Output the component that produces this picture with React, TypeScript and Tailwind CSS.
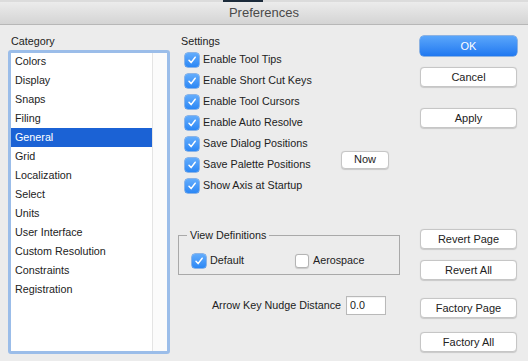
import React from "react";

const categories = [
  "Colors",
  "Display",
  "Snaps",
  "Filing",
  "General",
  "Grid",
  "Localization",
  "Select",
  "Units",
  "User Interface",
  "Custom Resolution",
  "Constraints",
  "Registration",
];

const settings = [
  "Enable Tool Tips",
  "Enable Short Cut Keys",
  "Enable Tool Cursors",
  "Enable Auto Resolve",
  "Save Dialog Positions",
  "Save Palette Positions",
  "Show Axis at Startup",
];

const CheckBox: React.FC<{ checked?: boolean }> = ({ checked }) =>
  checked ? (
    <span className="flex h-[14px] w-[14px] shrink-0 items-center justify-center rounded-[3px] bg-gradient-to-b from-[#62acfc] to-[#2a87f5] shadow-[0_0_0_0.5px_#2a7be0]">
      <svg width="10" height="10" viewBox="0 0 10 10">
        <path d="M2 5.2 L4.1 7.6 L8.2 2.2" fill="none" stroke="white" strokeWidth="1.5" strokeLinecap="round" strokeLinejoin="round" />
      </svg>
    </span>
  ) : (
    <span className="h-[14px] w-[14px] shrink-0 rounded-[3px] border border-[#b4b4b4] bg-white shadow-[0_0.5px_1px_rgba(0,0,0,0.15)]" />
  );

const Btn: React.FC<{ label: string; className?: string; primary?: boolean }> = ({ label, className = "", primary }) => (
  <div
    className={`flex h-[20px] w-[97px] items-center justify-center rounded-[4px] text-[11px] ${
      primary
        ? "bg-gradient-to-b from-[#5aa6fb] to-[#1f78f0] text-white shadow-[0_0_0_0.5px_#2c78d8]"
        : "border border-[#c6c6c6] bg-white text-[#222] shadow-[0_0.5px_1px_rgba(0,0,0,0.15)]"
    } ${className}`}
  >
    {label}
  </div>
);

export default function App() {
  return (
    <div className="h-[361px] w-[528px] overflow-hidden bg-[#ececec] text-[10.75px] text-[#222]" style={{ fontFamily: '"Liberation Sans", Arial, sans-serif' }}>
      {/* strip behind window */}
      <div className="flex h-[2px] bg-[#dcdcdc]">
        <div className="w-[223px]" />
        <div className="w-[40px] bg-[#1c2b3b]" />
      </div>
      {/* title bar */}
      <div className="flex h-[23px] items-center justify-center border-b border-[#b7b7b7] bg-gradient-to-b from-[#ececec] to-[#d4d4d4] text-[13px] text-[#4a4a4a]">
        Preferences
      </div>

      <div className="flex">
        {/* Category */}
        <div className="ml-[8px] w-[162px]">
          <div className="h-[25px] pl-[3px] pt-[9px] leading-[14px]">Category</div>
          <div className="flex h-[304px] rounded-[3px] border-[3px] border-[#9bbde9] bg-white">
            <div className="-mt-[1px] w-[141px]">
              {categories.map((c) => (
                <div
                  key={c}
                  className={`flex h-[19px] items-center pl-[4px] ${c === "General" ? "bg-[#1b62d5] text-white" : ""}`}
                >
                  {c}
                </div>
              ))}
            </div>
            <div className="flex-1 border-l border-[#e4e4e4] bg-[#fbfbfb]" />
          </div>
        </div>

        {/* Settings */}
        <div className="ml-[8px] w-[222px]">
          <div className="h-[24px] pl-[3px] pt-[9px] leading-[14px]">Settings</div>
          {settings.map((s, i) => (
            <div key={s} className="flex h-[21px] items-center gap-[4px] pl-[7px]">
              <CheckBox checked />
              <span className={i === 5 ? "w-[134px]" : ""}>{s}</span>
              {i === 5 && (
                <div className="-mt-[10px] flex h-[18px] w-[48px] items-center justify-center rounded-[4px] border border-[#c6c6c6] bg-white text-[11px] shadow-[0_0.5px_1px_rgba(0,0,0,0.15)]">
                  Now
                </div>
              )}
            </div>
          ))}

          <fieldset className="mt-[32px] h-[47px] w-[222px] border border-[#a9a9a9]">
            <legend className="ml-[8px] px-[3px] leading-[14px]">View Definitions</legend>
            <div className="mt-[8px] flex h-[21px] items-center pl-[13px]">
              <div className="flex w-[103px] items-center gap-[4px]">
                <CheckBox checked />
                <span>Default</span>
              </div>
              <div className="flex items-center gap-[4px]">
                <CheckBox />
                <span>Aerospace</span>
              </div>
            </div>
          </fieldset>

          <div className="mt-[21px] flex h-[19px] w-[208px] items-center justify-end gap-[5px]">
            <span>Arrow Key Nudge Distance</span>
            <div className="flex h-[19px] w-[40px] items-center border border-[#b9b9b9] bg-white pl-[3px] shadow-[inset_0_0.5px_1px_rgba(0,0,0,0.1)]">
              0.0
            </div>
          </div>
        </div>

        {/* Buttons */}
        <div className="ml-[20px] flex flex-col">
          <Btn label="OK" primary className="mt-[11px]" />
          <Btn label="Cancel" className="mt-[11px]" />
          <Btn label="Apply" className="mt-[21px]" />
          <Btn label="Revert Page" className="mt-[101px]" />
          <Btn label="Revert All" className="mt-[11px]" />
          <Btn label="Factory Page" className="mt-[18px]" />
          <Btn label="Factory All" className="mt-[14px]" />
        </div>
      </div>
    </div>
  );
}
